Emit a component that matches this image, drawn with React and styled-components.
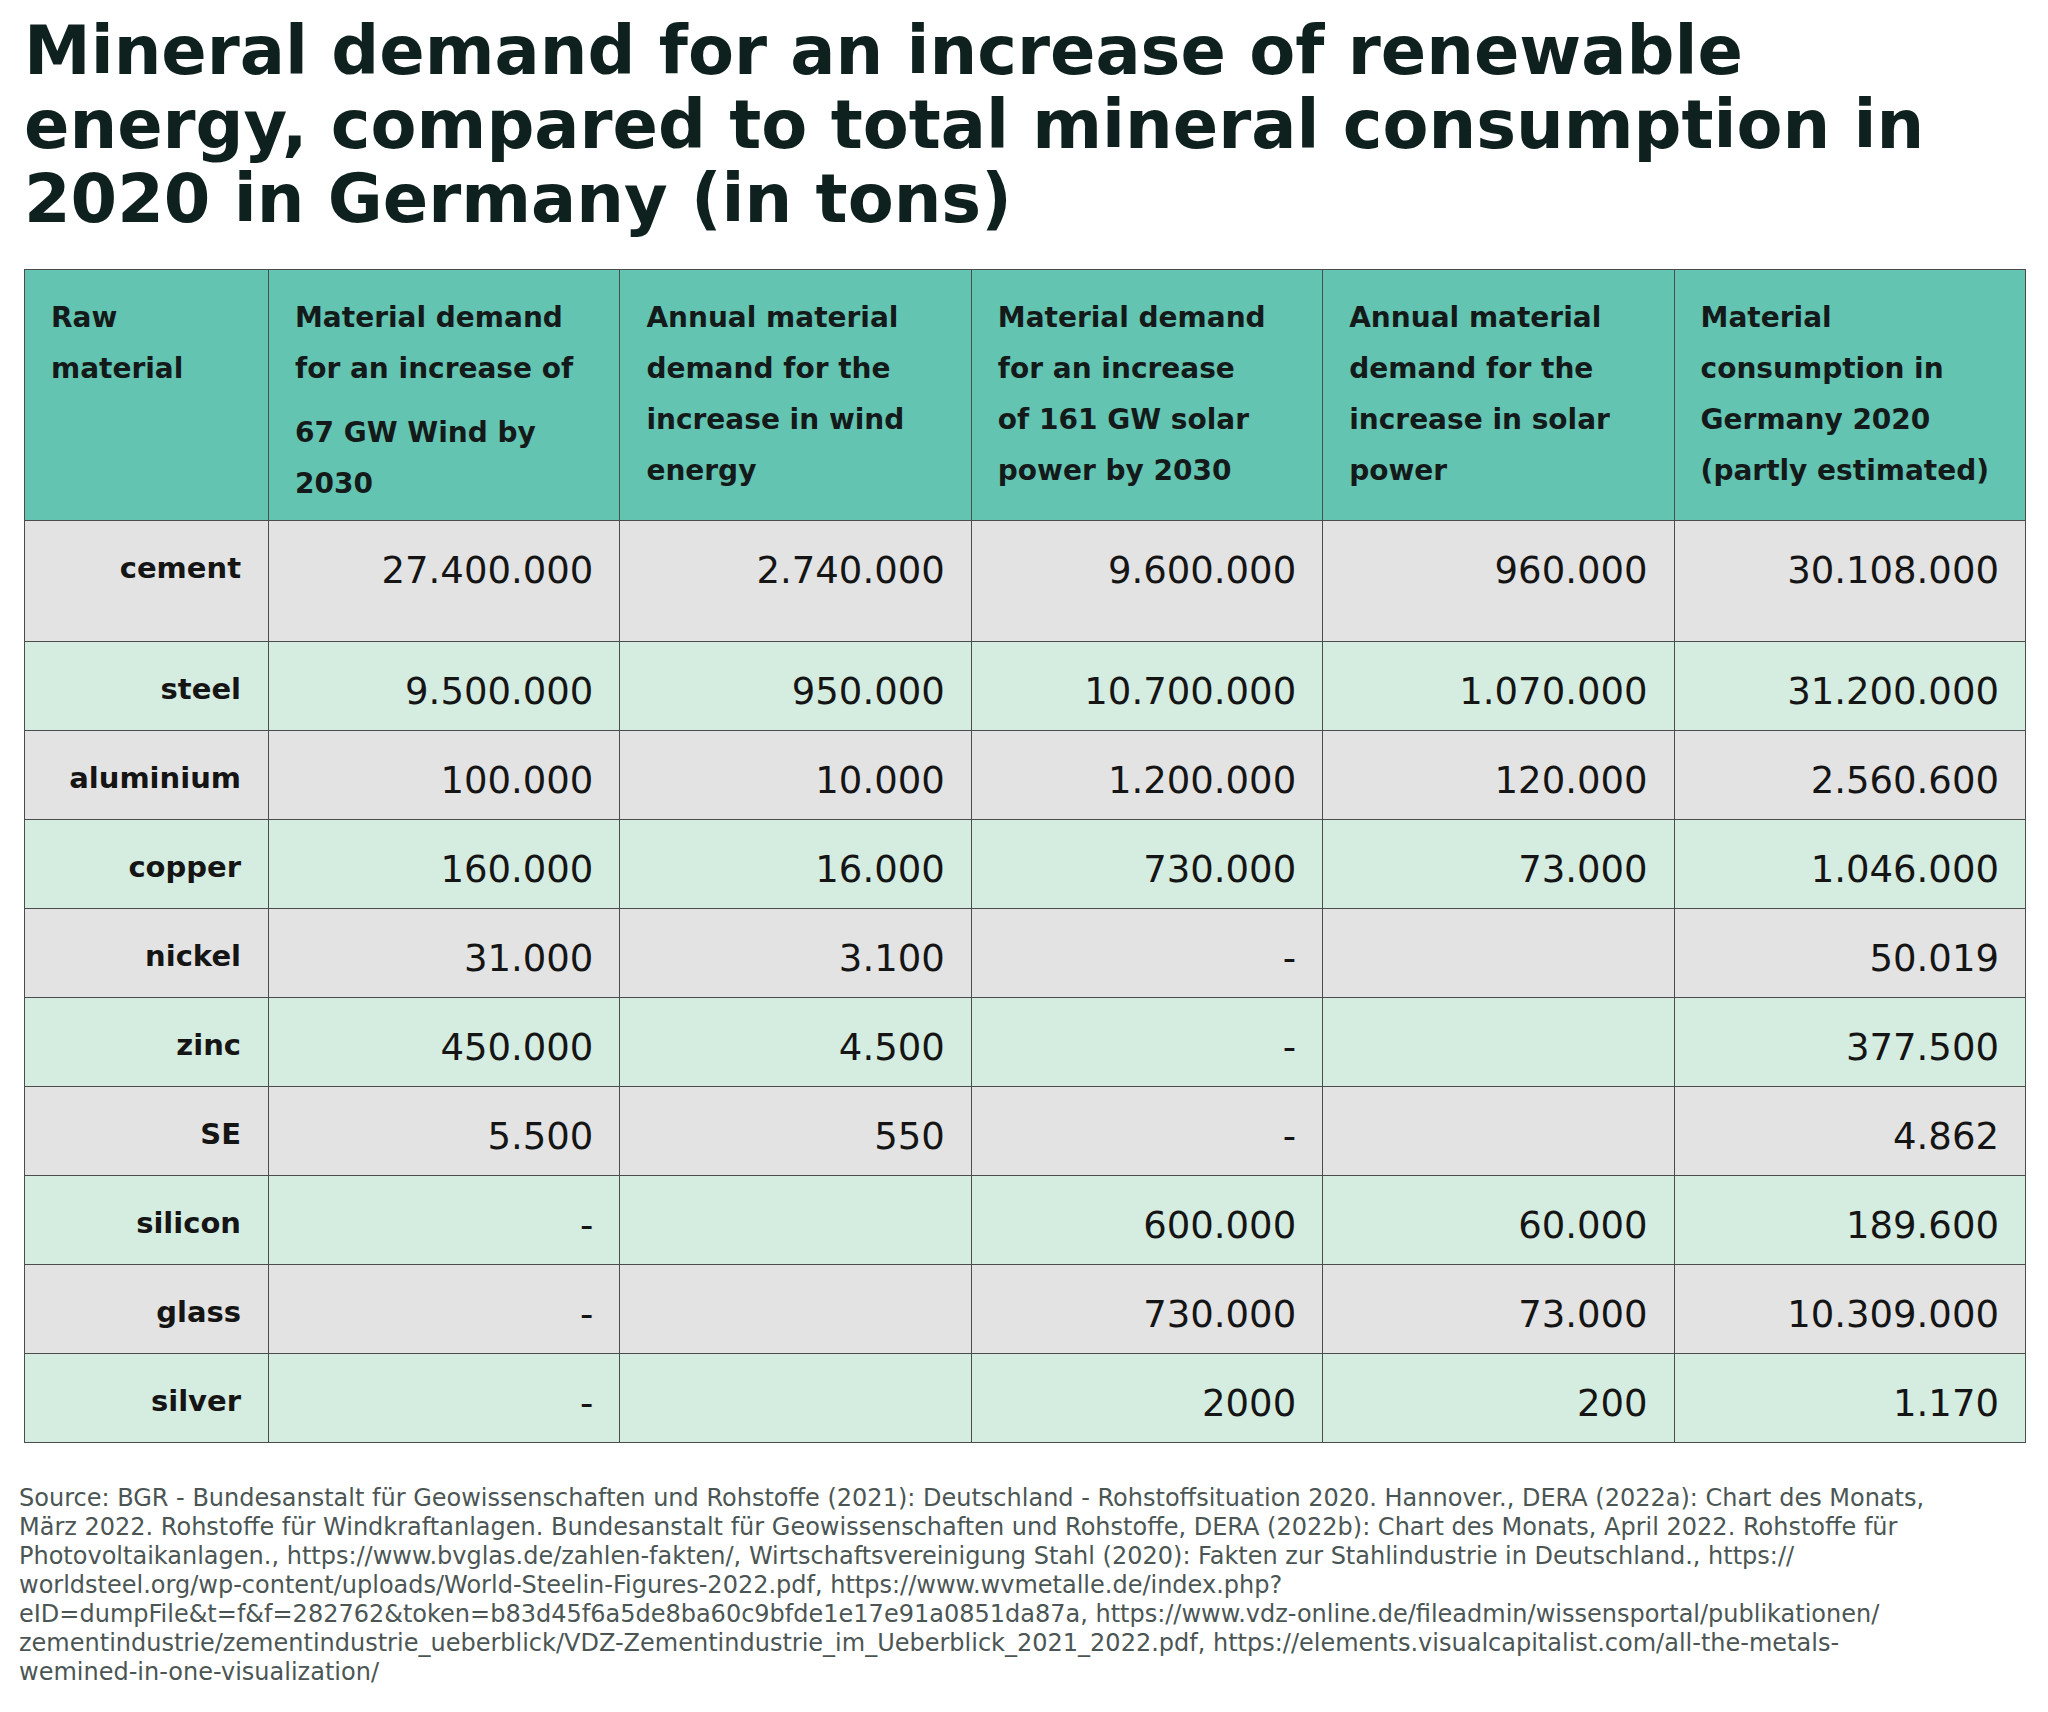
import React from "react";
import styled, { createGlobalStyle } from "styled-components";

const GlobalStyle = createGlobalStyle`
  html, body {
    margin: 0;
    padding: 0;
    background: #ffffff;
  }
  body {
    font-family: "DejaVu Sans", "Liberation Sans", sans-serif;
  }
`;

const Page = styled.div`
  width: 2048px;
  box-sizing: border-box;
  padding: 14px 22px 40px 24px;
  display: flex;
  flex-direction: column;
`;

const Title = styled.h1`
  margin: 0;
  font-family: "DejaVu Sans", sans-serif;
  font-weight: 700;
  font-size: 67px;
  line-height: 74px;
  color: #0f211e;
  white-space: nowrap;
`;

const Table = styled.div`
  margin-top: 33px;
  display: flex;
  flex-direction: column;
  gap: 1px;
  background: #4a4d4c;
  border: 1px solid #4a4d4c;
`;

const Row = styled.div`
  display: grid;
  grid-template-columns: 243px repeat(5, 1fr);
  gap: 1px;
  height: ${(p) => p.$height}px;
`;

const bgFor = (tone) =>
  tone === "head" ? "#62c4b1" : tone === "green" ? "#d5ece0" : "#e3e3e3";

const HeadCell = styled.div`
  background: ${bgFor("head")};
  padding: 22px 20px 0 26px;
  font-size: 28px;
  font-weight: 700;
  line-height: 51px;
  color: #141a19;
  white-space: nowrap;
`;

const HeadPara = styled.p`
  margin: 0;
  & + & {
    margin-top: 13px;
  }
`;

const LabelCell = styled.div`
  background: ${(p) => bgFor(p.$tone)};
  padding: 25px 27px 0 10px;
  text-align: right;
  font-size: 29px;
  font-weight: 700;
  line-height: 44px;
  color: #151515;
`;

const ValueCell = styled.div`
  background: ${(p) => bgFor(p.$tone)};
  padding: 28px 26px 0 10px;
  text-align: right;
  font-size: 37px;
  font-weight: 400;
  line-height: 44px;
  color: #151515;
`;

const Source = styled.div`
  margin-top: 41px;
  margin-left: -5px;
  font-size: 24px;
  line-height: 29px;
  color: #4b5654;
  white-space: nowrap;
`;

const headers = [
  [["Raw", "material"]],
  [["Material demand", "for an increase of"], ["67 GW Wind by", "2030"]],
  [["Annual material", "demand for the", "increase in wind", "energy"]],
  [["Material demand", "for an increase", "of 161 GW solar", "power by 2030"]],
  [["Annual material", "demand for the", "increase in solar", "power"]],
  [["Material", "consumption in", "Germany 2020", "(partly estimated)"]],
];

const rows = [
  ["cement", "27.400.000", "2.740.000", "9.600.000", "960.000", "30.108.000"],
  ["steel", "9.500.000", "950.000", "10.700.000", "1.070.000", "31.200.000"],
  ["aluminium", "100.000", "10.000", "1.200.000", "120.000", "2.560.600"],
  ["copper", "160.000", "16.000", "730.000", "73.000", "1.046.000"],
  ["nickel", "31.000", "3.100", "-", "", "50.019"],
  ["zinc", "450.000", "4.500", "-", "", "377.500"],
  ["SE", "5.500", "550", "-", "", "4.862"],
  ["silicon", "-", "", "600.000", "60.000", "189.600"],
  ["glass", "-", "", "730.000", "73.000", "10.309.000"],
  ["silver", "-", "", "2000", "200", "1.170"],
];

const sourceLines = [
  "Source: BGR - Bundesanstalt für Geowissenschaften und Rohstoffe (2021): Deutschland - Rohstoffsituation 2020. Hannover., DERA (2022a): Chart des Monats,",
  "März 2022. Rohstoffe für Windkraftanlagen. Bundesanstalt für Geowissenschaften und Rohstoffe, DERA (2022b): Chart des Monats, April 2022. Rohstoffe für",
  "Photovoltaikanlagen., https://www.bvglas.de/zahlen-fakten/, Wirtschaftsvereinigung Stahl (2020): Fakten zur Stahlindustrie in Deutschland., https://",
  "worldsteel.org/wp-content/uploads/World-Steelin-Figures-2022.pdf, https://www.wvmetalle.de/index.php?",
  "eID=dumpFile&t=f&f=282762&token=b83d45f6a5de8ba60c9bfde1e17e91a0851da87a, https://www.vdz-online.de/fileadmin/wissensportal/publikationen/",
  "zementindustrie/zementindustrie_ueberblick/VDZ-Zementindustrie_im_Ueberblick_2021_2022.pdf, https://elements.visualcapitalist.com/all-the-metals-",
  "wemined-in-one-visualization/",
];

const withBreaks = (lines) =>
  lines.map((line, i) => (
    <React.Fragment key={i}>
      {i > 0 && <br />}
      {line}
    </React.Fragment>
  ));

export default function App() {
  return (
    <>
      <GlobalStyle />
      <Page>
        <Title>
          {withBreaks([
            "Mineral demand for an increase of renewable",
            "energy, compared to total mineral consumption in",
            "2020 in Germany (in tons)",
          ])}
        </Title>
        <Table>
          <Row $height={250}>
            {headers.map((paras, i) => (
              <HeadCell key={i}>
                {paras.map((lines, j) => (
                  <HeadPara key={j}>{withBreaks(lines)}</HeadPara>
                ))}
              </HeadCell>
            ))}
          </Row>
          {rows.map((r, i) => {
            const tone = i % 2 === 0 ? "gray" : "green";
            return (
              <Row key={r[0]} $height={i === 0 ? 120 : 88}>
                <LabelCell $tone={tone}>{r[0]}</LabelCell>
                {r.slice(1).map((v, j) => (
                  <ValueCell key={j} $tone={tone}>
                    {v}
                  </ValueCell>
                ))}
              </Row>
            );
          })}
        </Table>
        <Source>{withBreaks(sourceLines)}</Source>
      </Page>
    </>
  );
}
